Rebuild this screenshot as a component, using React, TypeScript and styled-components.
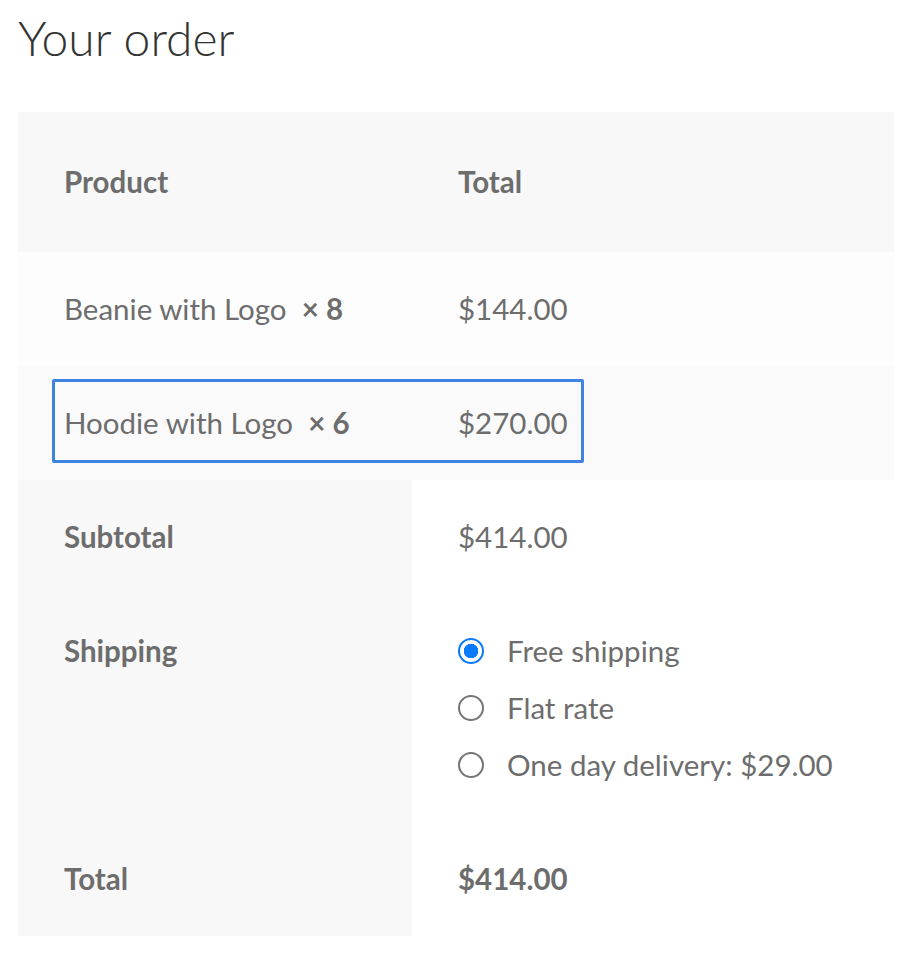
import React from 'react'
import styled, { createGlobalStyle } from 'styled-components'

const colors = {
  text: '#6d6d6d',
  heading: '#333333',
  headBg: '#f8f8f8',
  rowOdd: '#fdfdfd',
  rowEven: '#fafafa',
  focus: '#3f83e0',
  radio: '#0a7aff',
  radioOff: '#767676'
}

const GlobalStyle = createGlobalStyle`
  body {
    margin: 0;
    background: #ffffff;
    font-family: Lato, "Liberation Sans", sans-serif;
    color: ${colors.text};
  }
`

const Page = styled.div`
  padding: 8px 28px 0 18px;
`
const Title = styled.h3`
  margin: 0 0 44px;
  font-size: 48px;
  line-height: 60px;
  font-weight: 300;
  color: ${colors.heading};
`
const Table = styled.table`
  width: 876px;
  border-collapse: collapse;
  border-spacing: 0;
  table-layout: fixed;
  font-size: 29.5px;
  line-height: 50px;
`
const HeadCell = styled.th`
  padding: 45px 46px;
  background: ${colors.headBg};
  text-align: left;
  font-weight: 700;
`
const Cell = styled.td<{ $bg?: string; $bold?: boolean }>`
  position: relative;
  padding: 32px 46px;
  background: ${p => p.$bg || 'transparent'};
  font-weight: ${p => (p.$bold ? 700 : 400)};
  vertical-align: top;
`
const FootLabel = styled.th`
  padding: 32px 46px;
  background: ${colors.headBg};
  text-align: left;
  font-weight: 700;
  vertical-align: top;
`
const Quantity = styled.strong`
  font-weight: 700;
`
const FocusRing = styled.span`
  position: absolute;
  z-index: 1;
  left: 34px;
  top: 13px;
  width: 532px;
  height: 84px;
  box-sizing: border-box;
  border: 3px solid ${colors.focus};
  border-radius: 2px;
  pointer-events: none;
`
const Methods = styled.ul`
  list-style: none;
  margin: 0;
  padding: 0;
  display: flex;
  flex-direction: column;
  gap: 7px;
`
const Method = styled.li`
  display: flex;
  align-items: center;
  gap: 23px;
`
const Radio = styled.span<{ $checked?: boolean }>`
  flex: none;
  width: 26px;
  height: 26px;
  box-sizing: border-box;
  border-radius: 50%;
  border: 2px solid ${p => (p.$checked ? colors.radio : colors.radioOff)};
  background: ${p =>
    p.$checked ? `radial-gradient(circle, ${colors.radio} 0 7px, #fff 7.5px)` : '#fff'};
`

const items = [
  { name: 'Beanie with Logo', qty: 8, total: '$144.00' },
  { name: 'Hoodie with Logo', qty: 6, total: '$270.00' }
]

const methods = [
  { label: 'Free shipping', checked: true },
  { label: 'Flat rate', checked: false },
  { label: 'One day delivery: $29.00', checked: false }
]

const App = () => {
  return (
    <Page>
      <GlobalStyle />
      <Title>Your order</Title>
      <Table>
        <colgroup>
          <col style={{ width: 394 }} />
          <col style={{ width: 482 }} />
        </colgroup>
        <thead>
          <tr>
            <HeadCell>Product</HeadCell>
            <HeadCell>Total</HeadCell>
          </tr>
        </thead>
        <tbody>
          {items.map((item, i) => {
            const bg = i % 2 === 0 ? colors.rowOdd : colors.rowEven
            return (
              <tr key={item.name}>
                <Cell $bg={bg}>
                  {item.name}&nbsp; <Quantity>×&nbsp;{item.qty}</Quantity>
                  {i === 1 && <FocusRing />}
                </Cell>
                <Cell $bg={bg}>{item.total}</Cell>
              </tr>
            )
          })}
        </tbody>
        <tfoot>
          <tr>
            <FootLabel>Subtotal</FootLabel>
            <Cell>$414.00</Cell>
          </tr>
          <tr>
            <FootLabel>Shipping</FootLabel>
            <Cell>
              <Methods>
                {methods.map(m => (
                  <Method key={m.label}>
                    <Radio $checked={m.checked} />
                    {m.label}
                  </Method>
                ))}
              </Methods>
            </Cell>
          </tr>
          <tr>
            <FootLabel>Total</FootLabel>
            <Cell $bold>$414.00</Cell>
          </tr>
        </tfoot>
      </Table>
    </Page>
  )
}

export default App
